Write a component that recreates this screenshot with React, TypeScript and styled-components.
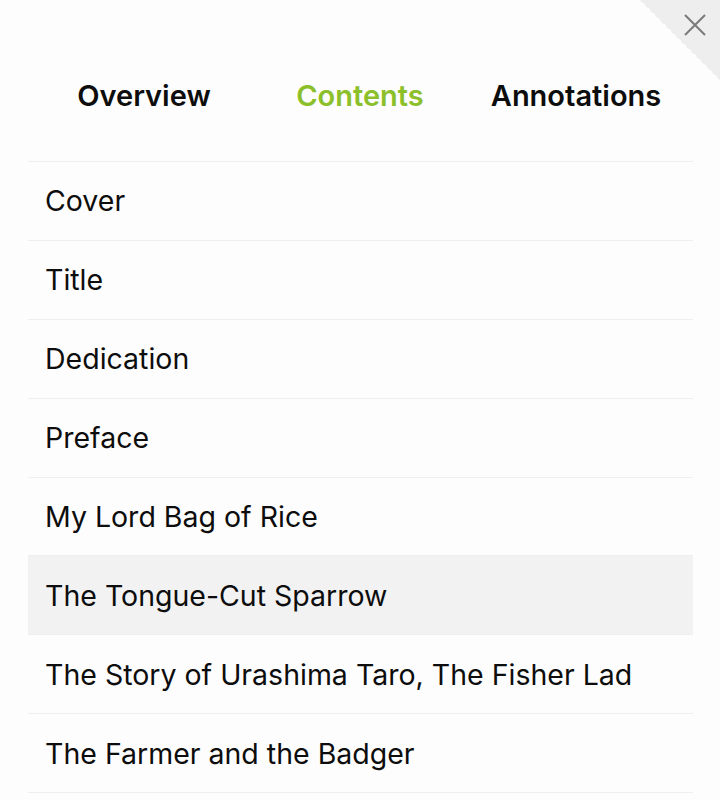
import React from 'react'
import styled, { createGlobalStyle } from 'styled-components'

const chapters = [
  'Cover',
  'Title',
  'Dedication',
  'Preface',
  'My Lord Bag of Rice',
  'The Tongue-Cut Sparrow',
  'The Story of Urashima Taro, The Fisher Lad',
  'The Farmer and the Badger',
]

const tabs = ['Overview', 'Contents', 'Annotations']

const App = () => {
  return (
    <Page>
      <GlobalStyle />
      <CloseCorner aria-label="Close">
        <svg width="22" height="22" viewBox="0 0 22 22">
          <path d="M1 1 L21 21 M21 1 L1 21" stroke="#7a7a7a" strokeWidth="2" fill="none" />
        </svg>
      </CloseCorner>
      <Tabs>
        {tabs.map((t) => (
          <Tab key={t} active={t === 'Contents'}>{t}</Tab>
        ))}
      </Tabs>
      <List>
        {chapters.map((c) => (
          <Row key={c} selected={c === 'The Tongue-Cut Sparrow'}>{c}</Row>
        ))}
      </List>
    </Page>
  )
}

export default App

//Styled Components
const GlobalStyle = createGlobalStyle`
  html, body {
    margin: 0;
    padding: 0;
    background: #fdfdfd;
  }
`
const Page = styled.div`
  position: relative;
  width: 720px;
  height: 800px;
  overflow: hidden;
  background: #fdfdfd;
  font-family: Inter, "Noto Sans", sans-serif;
  padding-top: 76px;
  box-sizing: border-box;
`
const CloseCorner = styled.div`
  position: absolute;
  top: 0;
  right: 0;
  width: 80px;
  height: 80px;
  background: linear-gradient(to bottom left, #eeeeee 50%, transparent 50%);
  svg {
    position: absolute;
    top: 14px;
    right: 14px;
  }
`
const Tabs = styled.div`
  display: grid;
  grid-template-columns: repeat(3, 216px);
  padding: 0 36px;
  height: 40px;
`
const Tab = styled.div<{ active?: boolean }>`
  text-align: center;
  font-size: 29px;
  font-weight: 600;
  line-height: 40px;
  color: ${(props) => (props.active ? '#8cc02b' : '#0d0d0d')};
`
const List = styled.div`
  margin: 45px 27px 0 28px;
  border-top: 1px solid #efefef;
`
const Row = styled.div<{ selected?: boolean }>`
  height: 77.88px;
  display: flex;
  align-items: center;
  padding-left: 17px;
  font-size: 28.5px;
  font-weight: 400;
  color: #0d0d0d;
  border-bottom: 1px solid #efefef;
  background: ${(props) => (props.selected ? '#f2f2f2' : 'transparent')};
`
